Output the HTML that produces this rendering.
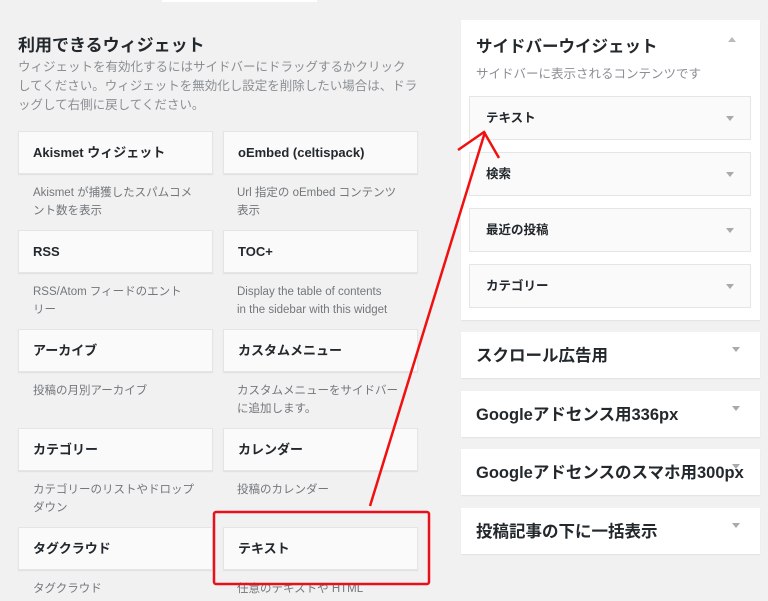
<!DOCTYPE html>
<html><head><meta charset="utf-8"><style>
body{margin:0;width:768px;height:601px;background:#f1f1f1;font-family:"Liberation Sans","Noto Sans CJK JP",sans-serif;position:relative;overflow:hidden;color:#23282d}
.a{position:absolute}
.card{position:absolute;background:#fafafa;box-shadow:0 1px 1px rgba(0,0,0,.08);border:1px solid #e5e5e5;box-sizing:border-box;font-size:13px;font-weight:bold;padding-left:14px;line-height:42px}
.desc{position:absolute;font-size:11.5px;color:#72777c;line-height:18px}
.item{position:absolute;left:469px;width:282px;height:44px;background:#fafafa;border:1px solid #e5e5e5;box-sizing:border-box;font-size:12.5px;font-weight:bold;padding-left:16px;line-height:42px}
.box{position:absolute;left:461px;width:299px;height:46px;background:#fff;box-shadow:0 1px 1px rgba(0,0,0,.06);font-size:16.5px;font-weight:bold;padding-left:15px;line-height:48px;box-sizing:border-box;white-space:nowrap}
.tri{position:absolute;right:20px;top:15px;width:0;height:0;border-left:4px solid transparent;border-right:4px solid transparent;border-top:5px solid #aaa}
</style></head><body>
<div class="a" style="left:162px;top:0;width:155px;height:2px;background:#fff"></div>
<div class="a" style="left:18px;top:31px;font-size:17px;font-weight:bold">利用できるウィジェット</div>
<div class="a" style="left:18px;top:58px;width:400px;font-size:12.5px;color:#8a8f94;line-height:19px">ウィジェットを有効化するにはサイドバーにドラッグするかクリックしてください。ウィジェットを無効化し設定を削除したい場合は、ドラッグして右側に戻してください。</div>

<div class="card" style="left:18px;top:131px;width:195px;height:43px">Akismet ウィジェット</div>
<div class="card" style="left:223px;top:131px;width:195px;height:43px">oEmbed (celtispack)</div>
<div class="desc" style="left:33px;top:184px">Akismet が捕獲したスパムコメ<br>ント数を表示</div>
<div class="desc" style="left:237px;top:184px">Url 指定の oEmbed コンテンツ<br>表示</div>

<div class="card" style="left:18px;top:230px;width:195px;height:43px">RSS</div>
<div class="card" style="left:223px;top:230px;width:195px;height:43px">TOC+</div>
<div class="desc" style="left:33px;top:283px">RSS/Atom フィードのエント<br>リー</div>
<div class="desc" style="left:237px;top:283px">Display the table of contents<br>in the sidebar with this widget</div>

<div class="card" style="left:18px;top:329px;width:195px;height:43px">アーカイブ</div>
<div class="card" style="left:223px;top:329px;width:195px;height:43px">カスタムメニュー</div>
<div class="desc" style="left:33px;top:382px">投稿の月別アーカイブ</div>
<div class="desc" style="left:237px;top:382px">カスタムメニューをサイドバー<br>に追加します。</div>

<div class="card" style="left:18px;top:428px;width:195px;height:43px">カテゴリー</div>
<div class="card" style="left:223px;top:428px;width:195px;height:43px">カレンダー</div>
<div class="desc" style="left:33px;top:481px">カテゴリーのリストやドロップ<br>ダウン</div>
<div class="desc" style="left:237px;top:481px">投稿のカレンダー</div>

<div class="card" style="left:18px;top:527px;width:195px;height:43px">タグクラウド</div>
<div class="card" style="left:223px;top:527px;width:195px;height:43px">テキスト</div>
<div class="desc" style="left:33px;top:580px">タグクラウド</div>
<div class="desc" style="left:237px;top:580px">任意のテキストや HTML</div>

<div class="a" style="left:461px;top:20px;width:299px;height:300px;background:#fff;box-shadow:0 1px 1px rgba(0,0,0,.06)"></div>
<div class="a" style="left:476px;top:33px;font-size:16.5px;font-weight:bold">サイドバーウイジェット</div>
<div class="a" style="left:728px;top:37px;width:0;height:0;border-left:4px solid transparent;border-right:4px solid transparent;border-bottom:5px solid #bbb"></div>
<div class="a" style="left:476px;top:63px;font-size:12.5px;color:#8a8f94">サイドバーに表示されるコンテンツです</div>
<div class="item" style="top:96px">テキスト<div class="tri" style="top:19px;right:16px"></div></div>
<div class="item" style="top:152px">検索<div class="tri" style="top:19px;right:16px"></div></div>
<div class="item" style="top:208px">最近の投稿<div class="tri" style="top:19px;right:16px"></div></div>
<div class="item" style="top:264px">カテゴリー<div class="tri" style="top:19px;right:16px"></div></div>

<div class="box" style="top:332px">スクロール広告用<div class="tri"></div></div>
<div class="box" style="top:391px">Googleアドセンス用336px<div class="tri"></div></div>
<div class="box" style="top:449px">Googleアドセンスのスマホ用300px<div class="tri"></div></div>
<div class="box" style="top:508px">投稿記事の下に一括表示<div class="tri"></div></div>

<svg class="a" style="left:0;top:0" width="768" height="601">
<rect x="214" y="512" width="215" height="72" rx="2" fill="none" stroke="#e8101a" stroke-width="2.5"/>
<path d="M370 506 L485 132" stroke="#f01010" stroke-width="2.5" fill="none"/>
<path d="M458 150 L484 132 L499 158" stroke="#f01010" stroke-width="2.5" fill="none"/>
</svg>
</body></html>
